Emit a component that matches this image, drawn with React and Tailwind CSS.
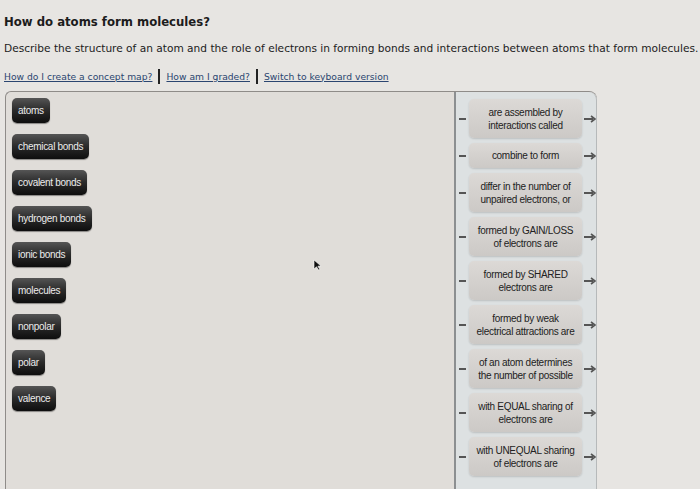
import React from 'react';

const terms = ['atoms', 'chemical bonds', 'covalent bonds', 'hydrogen bonds', 'ionic bonds', 'molecules', 'nonpolar', 'polar', 'valence'];

const links = [
  ['are assembled by', 'interactions called'],
  ['combine to form'],
  ['differ in the number of', 'unpaired electrons, or'],
  ['formed by GAIN/LOSS', 'of electrons are'],
  ['formed by SHARED', 'electrons are'],
  ['formed by weak', 'electrical attractions are'],
  ['of an atom determines', 'the number of possible'],
  ['with EQUAL sharing of', 'electrons are'],
  ['with UNEQUAL sharing', 'of electrons are'],
];

const Arrow = () => (
  <svg width="12" height="8" viewBox="0 0 12 8" className="shrink-0">
    <path d="M0 4 H9" stroke="#555" strokeWidth="2" />
    <path d="M7 1 L11 4 L7 7" fill="none" stroke="#555" strokeWidth="1.6" />
  </svg>
);

export default function App() {
  return (
    <div className="relative w-[700px] h-[489px] overflow-hidden bg-[#e7e5e2] text-[#1c1c1c]" style={{ fontFamily: '"DejaVu Sans", Verdana, sans-serif' }}>
      {/* header */}
      <div className="px-[4px] pt-[15px]">
        <h1 className="text-[11.7px] font-bold leading-[15px]">How do atoms form molecules?</h1>
        <p className="mt-[11px] text-[10.6px] leading-[14px] whitespace-nowrap">
          Describe the structure of an atom and the role of electrons in forming bonds and interactions between atoms that form molecules.
        </p>
        <div className="mt-[14px] flex items-center text-[9.2px] leading-[12px] text-[#2b4570]">
          <span className="underline">How do I create a concept map?</span>
          <span className="mx-[6px] w-[2px] h-[15px] bg-[#222]" />
          <span className="underline">How am I graded?</span>
          <span className="mx-[6px] w-[2px] h-[15px] bg-[#222]" />
          <span className="underline">Switch to keyboard version</span>
        </div>
      </div>

      {/* concept map panel */}
      <div className="mt-[7px] ml-[5px] w-[592px] h-[398px] flex border-t border-l border-[#8f8c89] rounded-tl-[6px] rounded-tr-[8px] bg-[#e0ddd9]" style={{ fontFamily: '"Liberation Sans", Arial, sans-serif' }}>
        <div className="flex-1 flex flex-col items-start gap-[11px] pl-[6px] pt-[6px]">
          {terms.map((t) => (
            <div key={t} className="h-[25px] px-[6px] flex items-center rounded-[5px] bg-gradient-to-b from-[#555] via-[#2a2a2a] to-[#0e0e0e] shadow-[0_1px_1px_rgba(0,0,0,0.4)] text-[10px] text-[#ececec] tracking-[-0.3px]">
              {t}
            </div>
          ))}
        </div>
        <div className="w-[143px] bg-[#dde1e2] border-l-2 border-[#8c8f91] rounded-tr-[8px] border-r border-r-[#b6b9ba] flex flex-col gap-[5px] pt-[7px]">
          {links.map((l, i) => (
            <div key={i} className="flex items-center">
              <span className="ml-[3px] w-[7px] h-[2px] bg-[#555] shrink-0" />
              <div className={`ml-[3px] w-[117px] ${l.length > 1 ? 'h-[39px]' : 'h-[25px]'} rounded-[5px] bg-gradient-to-b from-[#dcd9d6] to-[#ccc9c6] shadow-[0_1px_2px_rgba(0,0,0,0.15)] flex flex-col items-center justify-center text-[10px] leading-[13px] text-[#222] tracking-[-0.3px] text-center`}>
                {l.map((s) => <span key={s}>{s}</span>)}
              </div>
              <span className="ml-[2px]"><Arrow /></span>
            </div>
          ))}
        </div>
      </div>
      <div className="h-[3px] bg-[#f2f1ef]" />

      {/* mouse cursor */}
      <svg className="absolute left-[313px] top-[259px]" width="9" height="12" viewBox="0 0 9 12">
        <path d="M1 1 L1 10 L3.5 7.8 L5.5 11 L6.8 10.3 L4.9 7.2 L8 7 Z" fill="#111" stroke="#fff" strokeWidth="0.6" />
      </svg>
    </div>
  );
}
